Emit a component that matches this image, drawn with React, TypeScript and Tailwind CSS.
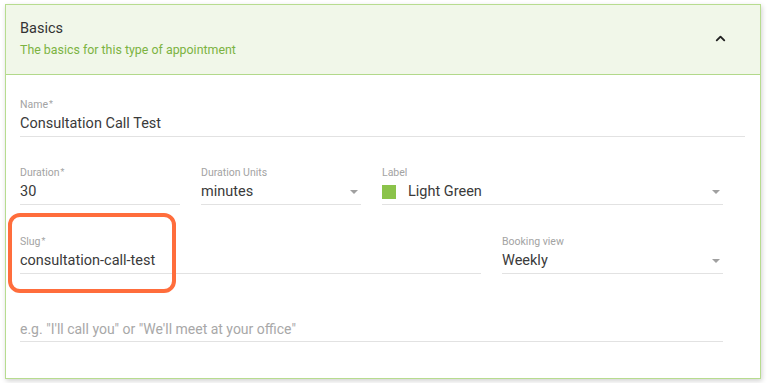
import { ChevronUp } from "lucide-react";

function Caret() {
  return <span className="w-0 h-0 border-x-[4px] border-t-[4px] border-x-transparent border-t-[#a0a0a0] mr-[3px]" />;
}

function Field({
  label,
  required,
  value,
  placeholder,
  select,
  swatch,
}: {
  label?: string;
  required?: boolean;
  value?: string;
  placeholder?: string;
  select?: boolean;
  swatch?: string;
}) {
  return (
    <div className="flex flex-col">
      <div className="h-[14px] text-[10.5px] leading-[14px] text-[#a3a3a3]">
        {label}
        {required && <sup className="text-[9px] ml-[1px] relative top-[-1px]">*</sup>}
      </div>
      <div className="h-[24px] flex items-center border-b border-[#e2e2e2] box-content">
        {swatch && <span className="w-[14px] h-[14px] mr-[12px]" style={{ backgroundColor: swatch }} />}
        <span className={"flex-1 " + (value ? "text-[#3a3a3a] text-[14.5px]" : "text-[#a8a8a8] text-[14px]")}>
          {value ?? placeholder}
        </span>
        {select && <Caret />}
      </div>
    </div>
  );
}

export default function App() {
  return (
    <div className="relative w-[768px] h-[383px] bg-white pt-[4px] pl-[5px] font-['Roboto',sans-serif]">
      <div className="w-[756px] h-[375px] border border-[#b7dc8f] bg-white shadow-[1px_2px_5px_rgba(0,0,0,0.18)]">
        <div className="h-[70px] bg-[#f1f7e9] border-b border-[#b2d98a] flex items-center justify-between pl-[14px] pr-[32px]">
          <div className="flex flex-col gap-[3px] pb-[2px]">
            <div className="text-[14.5px] leading-[20px] text-[#333]">Basics</div>
            <div className="text-[12.4px] leading-[16px] text-[#7cb342]">The basics for this type of appointment</div>
          </div>
          <ChevronUp size={15} strokeWidth={3} className="text-[#222] mb-[2px]" />
        </div>

        <div className="pl-[14px] pt-[23px] flex flex-col">
          <div className="w-[725px]">
            <Field label="Name" required value="Consultation Call Test" />
          </div>
          <div className="grid grid-cols-[160px_160px_341px] gap-x-[21px] mt-[29px]">
            <Field label="Duration" required value="30" />
            <Field label="Duration Units" value="minutes" select />
            <Field label="Label" value="Light Green" select swatch="#8bc34a" />
          </div>
          <div className="grid grid-cols-[461px_221px] gap-x-[21px] mt-[30px]">
            <Field label="Slug" required value="consultation-call-test" />
            <Field label="Booking view" value="Weekly" select />
          </div>
          <div className="w-[703px] mt-[29px]">
            <Field placeholder={'e.g. "I\'ll call you" or "We\'ll meet at your office"'} />
          </div>
        </div>
      </div>

      <div className="absolute left-[8px] top-[213px] w-[168px] h-[80px] border-[4px] border-[#ff6d3c] rounded-[12px]" />
    </div>
  );
}
